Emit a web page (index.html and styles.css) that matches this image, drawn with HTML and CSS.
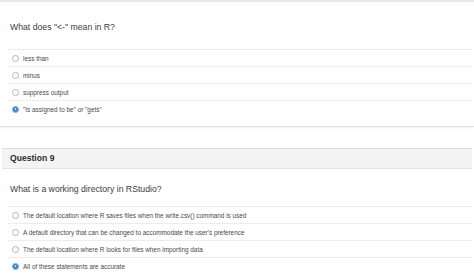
FILE: index.html
```html
<!DOCTYPE html>
<html>
<head>
<meta charset="utf-8">
<link rel="stylesheet" href="styles.css">
</head>
<body>
<div class="top-strip"></div>
<section class="card first">
  <div class="question">What does "&lt;-" mean in R?</div>
  <ul class="options">
    <li><span class="radio"></span>less than</li>
    <li><span class="radio"></span>minus</li>
    <li><span class="radio"></span>suppress output</li>
    <li><span class="radio checked"></span>"Is assigned to be" or "gets"</li>
  </ul>
</section>
<section class="card second">
  <div class="header">Question 9</div>
  <div class="question q2">What is a working directory in RStudio?</div>
  <ul class="options">
    <li><span class="radio"></span>The default location where R saves files when the write.csv() command is used</li>
    <li><span class="radio"></span>A default directory that can be changed to accommodate the user's preference</li>
    <li><span class="radio"></span>The default location where R looks for files when importing data</li>
    <li><span class="radio checked"></span>All of these statements are accurate</li>
  </ul>
</section>
</body>
</html>
```
FILE: styles.css
```css
html, body {
  margin: 0;
  padding: 0;
  background: #fff;
  font-family: "Liberation Sans", Arial, sans-serif;
  color: #333;
  overflow: hidden;
}
.top-strip {
  height: 2px;
  background: #e9e9e9;
}
.card {
  background: #fff;
}
.card.first {
  padding-bottom: 9px;
  border-bottom: 1px solid #e2e2e2;
  box-shadow: 0 1px 2px rgba(0,0,0,0.06);
}
.card.second {
  margin-top: 21px;
  margin-left: 2px;
  margin-right: 2px;
}
.header {
  height: 19px;
  line-height: 19px;
  background: #f4f4f4;
  border-top: 1px solid #dcdcdc;
  border-bottom: 1px solid #e4e4e4;
  padding-left: 8px;
  font-weight: bold;
  font-size: 8.6px;
  color: #2d2d2d;
}
.question {
  font-size: 8.7px;
  line-height: 12px;
  padding: 19px 10px 16px;
  color: #404040;
}
.question.q2 {
  padding: 14px 8px 11px;
}
.options {
  list-style: none;
  margin: 0 2px 0 8px;
  padding: 0;
}
.second .options {
  margin-left: 6px;
  margin-right: 0;
}
.options li {
  display: flex;
  align-items: center;
  height: 16px;
  border-top: 1px solid #ececec;
  font-size: 6.4px;
  color: #4a4a4a;
  padding-left: 4px;
  white-space: nowrap;
}
.radio {
  width: 5px;
  height: 5px;
  border: 0.8px solid #b4b4b4;
  border-radius: 50%;
  margin-right: 4px;
  flex: none;
  background: #fff;
  display: flex;
  align-items: center;
  justify-content: center;
}
.radio.checked {
  background: #3d86ea;
  border-color: #7aaef0;
}
.radio.checked::after {
  content: "";
  width: 1.6px;
  height: 1.6px;
  border-radius: 50%;
  background: #fff;
}
```
